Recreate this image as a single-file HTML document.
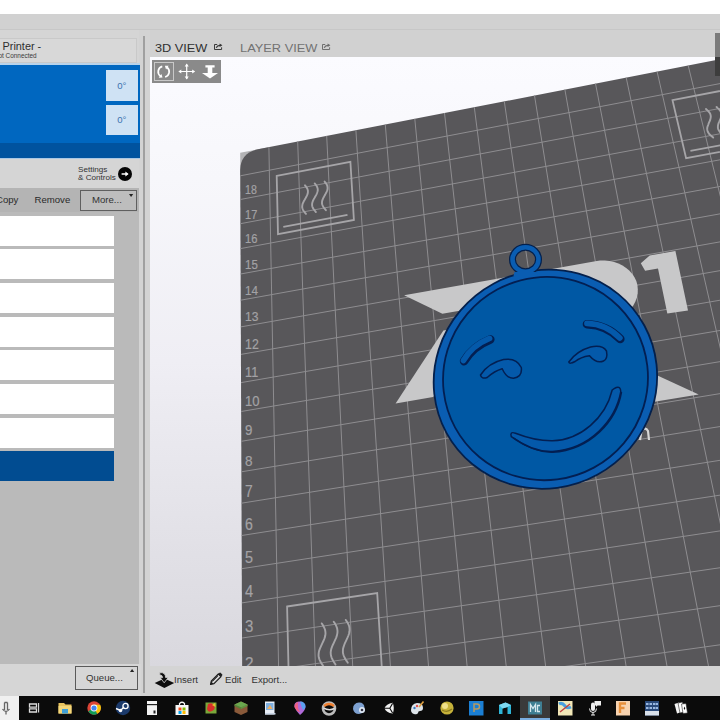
<!DOCTYPE html>
<html><head><meta charset="utf-8">
<style>
*{box-sizing:border-box}
html,body{margin:0;padding:0}
body{width:720px;height:720px;overflow:hidden;position:relative;background:#fff;font-family:"Liberation Sans",sans-serif;color:#333}
.a{position:absolute}
.t{position:absolute;white-space:nowrap;line-height:1}
</style></head><body>
<!-- top header band -->
<div class="a" style="left:0;top:14px;width:720px;height:43px;background:#d1d1d1"></div>
<div class="a" style="left:0;top:29px;width:720px;height:1px;background:#c7c7c7"></div>

<!-- left panel -->
<div class="a" style="left:0;top:30px;width:141px;height:634px;background:#d5d5d5"></div>
<div class="a" style="left:138.5px;top:30px;width:11px;height:666px;background:#d3d3d3"></div>
<div class="a" style="left:-4px;top:38px;width:141px;height:24.5px;background:#d8d8d8;border:1px solid #c9c9c9"></div>
<div class="t" style="left:2.5px;top:40.5px;font-size:10.9px;color:#2e2e2e">Printer -</div>
<div class="t" style="left:-1.5px;top:53px;font-size:6.4px;color:#3a3a3a">ot Connected</div>
<div class="a" style="left:0;top:63px;width:140px;height:2px;background:#b9d3ea"></div>
<div class="a" style="left:0;top:65px;width:140px;height:79px;background:#0067c0"></div>
<div class="a" style="left:0;top:143px;width:140px;height:15px;background:#00539f"></div>
<div class="a" style="left:0;top:157.5px;width:140px;height:1.5px;background:#a9c7e4"></div>
<div class="a" style="left:105.5px;top:70px;width:32px;height:31px;background:#cfe2f4"></div>
<div class="a" style="left:105.5px;top:104.5px;width:32px;height:30.5px;background:#cfe2f4"></div>
<div class="t" style="left:117.2px;top:81.3px;font-size:9.6px;color:#3d72ae">0°</div>
<div class="t" style="left:117.2px;top:114.8px;font-size:9.6px;color:#3d72ae">0°</div>

<div class="t" style="left:78px;top:165.6px;font-size:8.1px;color:#333;line-height:8px">Settings<br>&amp; Controls</div>
<div class="a" style="left:118px;top:166.5px;width:14px;height:14px;border-radius:50%;background:#050505"></div>
<svg class="a" style="left:118px;top:166.5px" width="14" height="14" viewBox="0 0 14 14"><path d="M3.6,7 H9.6" stroke="#fff" stroke-width="1.5" fill="none"/><path d="M7.4,4.4 L10.6,7 L7.4,9.6Z" fill="#fff"/></svg>

<div class="a" style="left:0;top:188px;width:138.5px;height:476px;background:#bababa"></div>
<div class="a" style="left:0;top:188px;width:138.5px;height:23.5px;background:#b4b4b4"></div>
<div class="t" style="left:-4px;top:195px;font-size:9.6px;color:#2a2a2a">Copy</div>
<div class="t" style="left:34.5px;top:195px;font-size:9.6px;color:#2a2a2a">Remove</div>
<div class="a" style="left:80px;top:190px;width:57px;height:21px;background:#bdbdbd;border:1px solid #5f5f5f"></div>
<div class="t" style="left:92px;top:195px;font-size:9.6px;color:#333">More...</div>
<svg class="a" style="left:128.8px;top:193.8px" width="5" height="4"><path d="M0,0H4.2L2.1,3Z" fill="#222"/></svg>
<div class="a" style="left:0;top:215.6px;width:113.75px;height:30px;background:#fff"></div>
<div class="a" style="left:0;top:249.2px;width:113.75px;height:30px;background:#fff"></div>
<div class="a" style="left:0;top:282.9px;width:113.75px;height:30px;background:#fff"></div>
<div class="a" style="left:0;top:316.5px;width:113.75px;height:30px;background:#fff"></div>
<div class="a" style="left:0;top:350.2px;width:113.75px;height:30px;background:#fff"></div>
<div class="a" style="left:0;top:383.8px;width:113.75px;height:30px;background:#fff"></div>
<div class="a" style="left:0;top:417.5px;width:113.75px;height:30px;background:#fff"></div>
<div class="a" style="left:0;top:451px;width:113.5px;height:29.5px;background:#014c91"></div>

<div class="a" style="left:0;top:664px;width:141px;height:32px;background:#d6d6d6"></div>
<div class="a" style="left:74.5px;top:666px;width:63px;height:23.5px;background:#d6d6d6;border:1px solid #5a5a5a"></div>
<div class="t" style="left:86px;top:672.5px;font-size:9.6px;color:#333">Queue...</div>
<svg class="a" style="left:130px;top:669px" width="5" height="4"><path d="M0,3H4.2L2.1,0Z" fill="#222"/></svg>

<!-- divider -->
<div class="a" style="left:142.5px;top:36px;width:2.2px;height:657px;background:#a0a0a0"></div>

<!-- view tabs -->
<div class="t" style="left:155.3px;top:42.7px;font-size:11.4px;color:#2f2f2f;transform:scaleX(1.115);transform-origin:0 0">3D VIEW</div>
<svg class="a" style="left:213px;top:43px" width="10" height="8" viewBox="0 0 10 8"><path d="M4.2,1.5H1.5V6.5H8.6V4.3" stroke="#333" stroke-width="0.95" fill="none"/><path d="M3.2,4.8Q4.2,2.6 7,2.4" stroke="#333" stroke-width="1.2" fill="none"/><path d="M6.6,0.4L9.4,2.3L6.6,4.1Z" fill="#333"/></svg>
<div class="t" style="left:239.8px;top:42.7px;font-size:11.4px;color:#727272;transform:scaleX(1.125);transform-origin:0 0">LAYER VIEW</div>
<svg class="a" style="left:321px;top:43px" width="10" height="8" viewBox="0 0 10 8"><path d="M4.2,1.5H1.5V6.5H8.6V4.3" stroke="#6a6a6a" stroke-width="0.95" fill="none"/><path d="M3.2,4.8Q4.2,2.6 7,2.4" stroke="#6a6a6a" stroke-width="1.2" fill="none"/><path d="M6.6,0.4L9.4,2.3L6.6,4.1Z" fill="#6a6a6a"/></svg>

<!-- viewport -->
<div class="a" style="left:149.5px;top:57px;width:571px;height:609px;background:linear-gradient(#fbfbff 0%,#f7f7fb 20%,#efeef4 50%,#d9d8de 100%);overflow:hidden">
<svg width="571" height="609" viewBox="149.5 57 571 609" style="position:absolute;left:0;top:0">
<polygon points="239.7,152.7 268.4,147.2 268.8,170.3 239.8,175.8" fill="#b3b3b5"/>
<path d="M239.7,170.0 Q240,153 257.4,149.3 L910.5,22.2 L1220.4,848.8 L242.8,961.6 Z" fill="#58575a"/>
<path d="M268.4,147.2L283.5,956.9M297.2,141.5L324.6,952.2M326.2,135.9L366.0,947.4M355.4,130.2L407.7,942.6M384.8,124.5L449.7,937.8M414.3,118.8L492.1,932.9M444.0,113.0L534.9,927.9M473.8,107.2L577.9,923.0M503.8,101.3L621.4,918.0M534.0,95.5L665.2,912.9M564.4,89.6L709.3,907.8M595.0,83.6L753.9,902.7M625.7,77.6L798.8,897.5M656.6,71.6L844.1,892.3M687.7,65.6L889.7,887.0M719.0,59.5L935.8,881.7M750.4,53.4L982.2,876.3M782.0,47.2L1029.0,870.9M813.9,41.0L1076.3,865.5M242.6,916.5L1202.7,801.5M242.5,872.9L1185.6,755.9M242.3,830.6L1169.1,711.8M242.1,789.7L1153.1,669.3M242.0,750.0L1137.7,628.1M241.8,711.6L1122.8,588.4M241.7,674.2L1108.3,549.9M241.6,638.0L1094.4,512.6M241.4,602.9L1080.8,476.5M241.3,568.7L1067.7,441.6M241.2,535.5L1055.0,407.6M241.0,503.2L1042.7,374.8M240.9,471.8L1030.7,342.8M240.8,441.3L1019.1,311.8M240.7,411.5L1007.8,281.7M240.6,382.6L996.8,252.5M240.5,354.4L986.2,224.0M240.3,326.9L975.8,196.4M240.2,300.2L965.7,169.5M240.1,274.0L955.9,143.3M240.0,248.6L946.3,117.8M239.9,223.7L937.0,93.0M239.8,199.5L927.9,68.8M239.8,175.8L919.1,45.2" stroke="#8e8d90" stroke-width="1" fill="none"/>
<polygon points="276.2,175.9 349.9,161.8 353.4,220.0 277.5,234.1" fill="none" stroke="#a6a5a8" stroke-width="1.8"/>
<path d="M282.8,226.9L347.0,214.9" stroke="#a6a5a8" stroke-width="1.8"/>
<path d="M304.5,185.3 L305.3,186.3 L306.0,187.4 L306.7,188.4 L307.1,189.5 L307.4,190.7 L307.4,191.9 L307.3,193.1 L306.9,194.4 L306.4,195.7 L305.7,197.0 L305.0,198.3 L304.2,199.7 L303.4,201.0 L302.8,202.3 L302.2,203.6 L301.9,204.9 L301.7,206.2 L301.7,207.4 L302.0,208.5 L302.4,209.6 L303.0,210.7 L303.8,211.8 L304.6,212.9 L305.5,213.9" stroke="#a6a5a8" stroke-width="1.9" fill="none" stroke-linecap="round"/>
<path d="M314.2,183.4 L315.1,184.5 L315.8,185.5 L316.5,186.6 L316.9,187.7 L317.2,188.8 L317.3,190.0 L317.1,191.2 L316.7,192.5 L316.2,193.8 L315.6,195.1 L314.8,196.5 L314.1,197.8 L313.3,199.1 L312.6,200.5 L312.1,201.8 L311.7,203.1 L311.6,204.3 L311.6,205.5 L311.9,206.7 L312.3,207.8 L313.0,208.9 L313.7,210.0 L314.6,211.0 L315.4,212.1" stroke="#a6a5a8" stroke-width="1.9" fill="none" stroke-linecap="round"/>
<path d="M324.1,181.6 L324.9,182.6 L325.7,183.6 L326.3,184.7 L326.8,185.8 L327.0,187.0 L327.1,188.1 L327.0,189.4 L326.6,190.6 L326.1,191.9 L325.4,193.2 L324.7,194.6 L323.9,195.9 L323.2,197.3 L322.5,198.6 L322.0,199.9 L321.6,201.2 L321.5,202.4 L321.5,203.6 L321.8,204.8 L322.3,205.9 L322.9,207.0 L323.7,208.1 L324.5,209.1 L325.4,210.2" stroke="#a6a5a8" stroke-width="1.9" fill="none" stroke-linecap="round"/>
<polygon points="672.0,100.1 751.5,84.8 767.6,143.0 685.6,158.2" fill="none" stroke="#a6a5a8" stroke-width="1.8"/>
<path d="M689.9,150.9L759.3,138.0" stroke="#a6a5a8" stroke-width="1.8"/>
<path d="M705.5,109.0 L706.7,110.1 L707.7,111.1 L708.6,112.2 L709.4,113.2 L709.9,114.4 L710.2,115.6 L710.3,116.8 L710.1,118.1 L709.8,119.4 L709.4,120.7 L708.8,122.0 L708.2,123.4 L707.7,124.8 L707.2,126.1 L706.8,127.4 L706.7,128.7 L706.8,129.9 L707.1,131.1 L707.6,132.3 L708.3,133.4 L709.2,134.5 L710.3,135.6 L711.5,136.6 L712.7,137.6" stroke="#a6a5a8" stroke-width="1.9" fill="none" stroke-linecap="round"/>
<path d="M716.1,107.0 L717.2,108.1 L718.3,109.1 L719.2,110.1 L720.0,111.2 L720.5,112.4 L720.8,113.6 L720.9,114.8 L720.8,116.0 L720.5,117.4 L720.0,118.7 L719.4,120.0 L718.9,121.4 L718.3,122.7 L717.8,124.1 L717.5,125.4 L717.4,126.7 L717.4,127.9 L717.7,129.1 L718.3,130.3 L719.0,131.4 L719.9,132.5 L721.0,133.5 L722.2,134.6 L723.4,135.6" stroke="#a6a5a8" stroke-width="1.9" fill="none" stroke-linecap="round"/>
<path d="M726.7,105.0 L727.8,106.0 L728.9,107.1 L729.8,108.1 L730.6,109.2 L731.1,110.4 L731.5,111.5 L731.5,112.8 L731.4,114.0 L731.1,115.3 L730.7,116.7 L730.1,118.0 L729.5,119.4 L729.0,120.7 L728.5,122.1 L728.2,123.4 L728.1,124.7 L728.1,125.9 L728.5,127.1 L729.0,128.3 L729.7,129.4 L730.7,130.5 L731.8,131.5 L732.9,132.6 L734.2,133.6" stroke="#a6a5a8" stroke-width="1.9" fill="none" stroke-linecap="round"/>
<polygon points="286.6,606.5 376.7,593.1 382.1,680.5 288.6,693.7" fill="none" stroke="#a6a5a8" stroke-width="1.8"/>
<path d="M295.1,683.3L374.0,672.1" stroke="#a6a5a8" stroke-width="1.8"/>
<path d="M321.3,623.4 L322.3,625.0 L323.2,626.7 L324.0,628.3 L324.6,630.0 L324.9,631.8 L325.0,633.5 L324.8,635.3 L324.4,637.2 L323.7,639.1 L322.9,641.0 L322.0,642.9 L321.1,644.8 L320.2,646.8 L319.4,648.7 L318.7,650.6 L318.3,652.4 L318.1,654.3 L318.1,656.1 L318.4,657.8 L319.0,659.6 L319.8,661.3 L320.7,663.0 L321.8,664.6 L322.8,666.3" stroke="#a6a5a8" stroke-width="1.9" fill="none" stroke-linecap="round"/>
<path d="M333.2,621.7 L334.3,623.3 L335.2,624.9 L336.0,626.6 L336.6,628.3 L336.9,630.0 L337.0,631.8 L336.8,633.6 L336.4,635.4 L335.8,637.3 L335.0,639.2 L334.1,641.1 L333.2,643.1 L332.3,645.0 L331.5,646.9 L330.8,648.8 L330.4,650.7 L330.2,652.5 L330.3,654.3 L330.6,656.1 L331.2,657.8 L332.0,659.5 L332.9,661.2 L334.0,662.9 L335.0,664.6" stroke="#a6a5a8" stroke-width="1.9" fill="none" stroke-linecap="round"/>
<path d="M345.3,619.9 L346.3,621.5 L347.3,623.1 L348.1,624.8 L348.7,626.5 L349.0,628.2 L349.1,630.0 L348.9,631.8 L348.5,633.7 L347.9,635.5 L347.1,637.4 L346.2,639.4 L345.3,641.3 L344.4,643.2 L343.6,645.2 L343.0,647.1 L342.5,648.9 L342.4,650.8 L342.4,652.6 L342.8,654.3 L343.4,656.1 L344.2,657.8 L345.1,659.5 L346.2,661.1 L347.3,662.8" stroke="#a6a5a8" stroke-width="1.9" fill="none" stroke-linecap="round"/>
<text transform="translate(244.6 668.6) scale(0.88 1)" font-size="17.4" fill="#a3a2a5" stroke="#a3a2a5" stroke-width="0.2" font-family="Liberation Sans">2</text>
<text transform="translate(244.6 632.3) scale(0.88 1)" font-size="17.0" fill="#a3a2a5" stroke="#a3a2a5" stroke-width="0.2" font-family="Liberation Sans">3</text>
<text transform="translate(244.6 597.1) scale(0.88 1)" font-size="16.7" fill="#a3a2a5" stroke="#a3a2a5" stroke-width="0.2" font-family="Liberation Sans">4</text>
<text transform="translate(244.6 563.0) scale(0.88 1)" font-size="16.3" fill="#a3a2a5" stroke="#a3a2a5" stroke-width="0.2" font-family="Liberation Sans">5</text>
<text transform="translate(244.6 529.7) scale(0.88 1)" font-size="16.0" fill="#a3a2a5" stroke="#a3a2a5" stroke-width="0.2" font-family="Liberation Sans">6</text>
<text transform="translate(244.6 497.4) scale(0.88 1)" font-size="15.7" fill="#a3a2a5" stroke="#a3a2a5" stroke-width="0.2" font-family="Liberation Sans">7</text>
<text transform="translate(244.6 466.0) scale(0.88 1)" font-size="15.4" fill="#a3a2a5" stroke="#a3a2a5" stroke-width="0.2" font-family="Liberation Sans">8</text>
<text transform="translate(244.6 435.4) scale(0.88 1)" font-size="15.1" fill="#a3a2a5" stroke="#a3a2a5" stroke-width="0.2" font-family="Liberation Sans">9</text>
<text transform="translate(244.6 405.6) scale(0.88 1)" font-size="14.8" fill="#a3a2a5" stroke="#a3a2a5" stroke-width="0.2" font-family="Liberation Sans">10</text>
<text transform="translate(244.6 376.8) scale(0.88 1)" font-size="14.4" fill="#a3a2a5" stroke="#a3a2a5" stroke-width="0.2" font-family="Liberation Sans">11</text>
<text transform="translate(244.6 348.7) scale(0.88 1)" font-size="14.0" fill="#a3a2a5" stroke="#a3a2a5" stroke-width="0.2" font-family="Liberation Sans">12</text>
<text transform="translate(244.6 321.3) scale(0.88 1)" font-size="13.7" fill="#a3a2a5" stroke="#a3a2a5" stroke-width="0.2" font-family="Liberation Sans">13</text>
<text transform="translate(244.6 294.6) scale(0.88 1)" font-size="13.3" fill="#a3a2a5" stroke="#a3a2a5" stroke-width="0.2" font-family="Liberation Sans">14</text>
<text transform="translate(244.6 268.6) scale(0.88 1)" font-size="13.0" fill="#a3a2a5" stroke="#a3a2a5" stroke-width="0.2" font-family="Liberation Sans">15</text>
<text transform="translate(244.6 243.3) scale(0.88 1)" font-size="12.7" fill="#a3a2a5" stroke="#a3a2a5" stroke-width="0.2" font-family="Liberation Sans">16</text>
<text transform="translate(244.6 218.5) scale(0.88 1)" font-size="12.4" fill="#a3a2a5" stroke="#a3a2a5" stroke-width="0.2" font-family="Liberation Sans">17</text>
<text transform="translate(244.6 194.4) scale(0.88 1)" font-size="12.1" fill="#a3a2a5" stroke="#a3a2a5" stroke-width="0.2" font-family="Liberation Sans">18</text>
<polygon points="403.6,295.2 551.7,268.9 555.5,293.9 441.9,313.8" fill="#c8c8c9"/>
<polygon points="550.0,269.2 594.8,261.2 599.6,260.6 604.3,260.6 609.0,261.0 613.6,262.0 618.0,263.5 622.0,265.5 625.7,267.9 629.0,270.7 631.8,273.9 634.1,277.4 635.8,281.1 636.9,285.1 637.3,289.2 637.2,293.3 636.4,297.4 634.9,301.5 632.9,305.3 630.3,309.0 627.1,312.3 623.5,315.3 619.5,317.9 615.1,320.0 610.5,321.6 605.7,322.7 559.5,330.7" fill="#c8c8c9"/>
<polygon points="442.9,330.4 501.0,320.3 432.6,397.1 395.1,403.4" fill="#c8c8c9"/>
<polygon points="476.6,405.8 657.5,375.7 698.2,394.5 479.4,430.3" fill="#c8c8c9"/>
<polygon points="640.3,263.3 644.6,270.8 657.5,268.5 666.8,313.4 687.5,310.5 674.9,250.9 649.2,255.5" fill="#c8c8c9"/><path d="M639.5,440 L641,430.5 Q645,426.5 647.5,431 L648.5,440" stroke="#d6d6d6" stroke-width="2.2" fill="none"/>
<g>
<ellipse cx="544.9" cy="379.2" rx="112.6" ry="108.7" transform="rotate(-28.5 544.9 379.2)" fill="#0a5db2" stroke="#04204c" stroke-width="1.8"/>
<ellipse cx="545" cy="378.6" rx="102.8" ry="101.3" transform="rotate(-28.5 545 378.6)" fill="#0058a4" stroke="#031f52" stroke-width="1.8"/>
<g stroke-linecap="round" fill="none">
<path d="M463.6,361.2 Q472,346.5 489.8,339.4" stroke="#031f52" stroke-width="8.6"/>
<path d="M463,360.4 Q471.5,345.5 489,338.4" stroke="#0459aa" stroke-width="5.8"/>
<path d="M586.5,324.2 Q606.5,325 619.8,339" stroke="#031f52" stroke-width="8.6"/>
<path d="M586.5,323.3 Q606,324 619.3,338" stroke="#0459aa" stroke-width="5.8"/>
</g>
<path d="M510.8,436.7 C525,447 540,452 552,451.5 C590,449 615,420 620.3,391.7 Q620,386 615.8,387.5 Q613.5,388.5 611.7,390 C605,418 580,440 552,440.8 C540,441 527,438 515,433.3 Q509,431 510.8,436.7Z" fill="#0459aa" stroke="#031f52" stroke-width="1.5"/>
<path d="M513,438 C527,448 541,452.6 552,452.3 C590,450 616,421 621,392" fill="none" stroke="#031f52" stroke-width="1.5"/>
<path d="M480,375 Q488,363 503,359.6 Q516,357.5 520.8,367.5 Q522,377 513,378.3 Q506,378.5 501.7,368.8 Q494,371 486.7,377.5 Q481,379.5 480,375Z" fill="#0459aa" stroke="#031f52" stroke-width="1.5"/>
<path d="M568.3,362 Q576,351 590,347 Q602,344.5 606,351 Q607.5,359 603,361 Q596,364 589,355.7 Q580,357 574.6,361.5 Q569,364.5 568.3,362Z" fill="#0459aa" stroke="#031f52" stroke-width="1.5"/>
<!-- hanging ring -->
<ellipse cx="525" cy="259.5" rx="13" ry="12.2" fill="none" stroke="#04204c" stroke-width="7"/>
<ellipse cx="525" cy="259.5" rx="13" ry="12.2" fill="none" stroke="#0a5db2" stroke-width="4.6"/>
<path d="M514,272 L536,272 L537,276 L513,276Z" fill="#0a5db2"/>
</g>

</svg>
</div>
<div class="a" style="left:715px;top:33px;width:5px;height:24px;background:#7b7b7b"></div>
<div class="a" style="left:715px;top:57px;width:5px;height:19px;background:#3d3d3d"></div>

<!-- toolbar -->
<div class="a" style="left:152px;top:60px;width:69px;height:23px;background:#8a8a8a"></div>
<div class="a" style="left:154px;top:61.5px;width:20px;height:19px;border:1px solid #c8c8c8"></div>
<svg class="a" style="left:152px;top:60px" width="69" height="23" viewBox="152 60 69 23">
<path d="M162.28,66.39 A5.5,5.5 0 0 0 160.55,76.21 M165.12,77.01 A5.5,5.5 0 0 0 166.85,67.19" fill="none" stroke="#fff" stroke-width="1.7"/><path d="M162.51,77.58L158.73,77.75L161.37,73.98ZM164.89,65.82L168.67,65.65L166.03,69.42Z" fill="#fff"/>
<g stroke="#fff" stroke-width="1.2"><path d="M179.5,71.5H194M186.7,64.5V79"/></g>
<g fill="#fff"><path d="M178.3,71.5L181.3,69.5V73.5Z"/><path d="M195.2,71.5L192.2,69.5V73.5Z"/><path d="M186.7,63.5L184.7,66.5H188.7Z"/><path d="M186.7,79.5L184.7,76.5H188.7Z"/></g>
<path d="M205.4,65.2H214.6V67.4H212.3V73H218L210,78.6L202,73H207.7V67.4H205.4Z" fill="#fff"/>
</svg>

<!-- bottom bar -->
<div class="a" style="left:149.5px;top:666px;width:571px;height:30px;background:#d4d4d4"></div>
<svg class="a" style="left:154px;top:671px" width="21" height="18" viewBox="0 0 21 18">
<path d="M0.7,12 L10.4,7.6 L20.2,12 L10.4,17Z" fill="#0d0d0d"/>
<path d="M5.8,1.6 Q11.6,1.2 11.6,6.6 L14.2,6.6 L10.2,11.8 L6.2,6.6 L8.6,6.6 Q8.6,4.2 5.8,3.9Z" fill="#0d0d0d" stroke="#d4d4d4" stroke-width="0.8"/>
</svg>
<svg class="a" style="left:209px;top:672px" width="14" height="14" viewBox="0 0 14 14">
<path d="M1.6,12.4 L2.4,9 L9.4,2 L12,4.6 L5,11.6 Z" fill="#d4d4d4" stroke="#1e1e1e" stroke-width="1.3" stroke-linejoin="round"/>
<path d="M1.6,12.4 L2.2,9.6 L4.4,11.8Z" fill="#1e1e1e"/>
<path d="M9.4,2 L10.6,0.8 Q11.2,0.4 11.8,0.9 L13.1,2.2 Q13.6,2.8 13.2,3.4 L12,4.6Z" fill="#1e1e1e"/>
<path d="M3.3,9.6 L8.8,4.1" stroke="#1e1e1e" stroke-width="0.9"/>
</svg>
<div class="t" style="left:174px;top:675px;font-size:9.6px;color:#333">Insert</div>
<div class="t" style="left:225px;top:675px;font-size:9.6px;color:#333">Edit</div>
<div class="t" style="left:251.5px;top:675px;font-size:9.6px;color:#333">Export...</div>

<!-- taskbar -->
<div class="a" style="left:0;top:696px;width:720px;height:24px;background:#0b0b0b"></div>
<div class="a" style="left:0;top:696px;width:19px;height:24px;background:#f0f0f0"></div>
<svg class="a" style="left:-2.0px;top:700.0px" width="16" height="16" viewBox="0 0 16 16"><path d="M6.5,2.5V10M9.5,2.5V10M6.5,2.5H9.5M4.5,9Q8,14 11.5,9M8,12V14.5" stroke="#666" stroke-width="1.3" fill="none"/></svg>
<svg class="a" style="left:25.0px;top:700.0px" width="16" height="16" viewBox="0 0 16 16"><path d="M4.5,4H11.5V7.2H4.5Z M4.5,8.8H11.5V12H4.5Z" stroke="#ddd" stroke-width="1.3" fill="none"/><path d="M13.6,3V12.5" stroke="#ddd" stroke-width="1.1"/></svg>
<svg class="a" style="left:57.0px;top:700.0px" width="16" height="16" viewBox="0 0 16 16"><path d="M1.5,3H7L8.5,4.5H14.5V13.5H1.5Z" fill="#e8c35e"/><path d="M1.5,6H14.5V13.5H1.5Z" fill="#f4d77a"/><path d="M5,9H11V13.5H5Z" fill="#3fa0d8"/></svg>
<svg class="a" style="left:85.5px;top:700.0px" width="16" height="16" viewBox="0 0 16 16"><circle cx="8" cy="8" r="6.7" fill="#db4437"/><path d="M8,8 L2.2,11.35 A6.7,6.7 0 0 0 11.35,13.8Z" fill="#0f9d58"/><path d="M8,8 L11.35,13.8 A6.7,6.7 0 0 0 14.2,4.8 L8,4.8Z" fill="#f4c20d"/><circle cx="8" cy="8" r="3.4" fill="#fff"/><circle cx="8" cy="8" r="2.6" fill="#4285f4"/></svg>
<svg class="a" style="left:114.5px;top:700.0px" width="16" height="16" viewBox="0 0 16 16"><circle cx="8" cy="8" r="7.2" fill="#1b3a6b"/><circle cx="10.5" cy="6" r="2.6" fill="none" stroke="#fff" stroke-width="1.3"/><circle cx="5.5" cy="10.5" r="1.8" fill="#fff"/><path d="M1,8.5 L5.5,10.5 L9,7" stroke="#fff" stroke-width="1.4" fill="none"/></svg>
<svg class="a" style="left:144.0px;top:700.0px" width="16" height="16" viewBox="0 0 16 16"><rect x="3" y="1" width="10" height="14" fill="#f2f2f2"/><rect x="3" y="4" width="10" height="1.2" fill="#222"/><rect x="9.5" y="10.5" width="2" height="3" fill="#222"/></svg>
<svg class="a" style="left:174.0px;top:700.0px" width="16" height="16" viewBox="0 0 16 16"><path d="M1.5,5H14.5V15H1.5Z" fill="#f6f6f6"/><path d="M5.5,5V3.5Q8,1 10.5,3.5V5" stroke="#f6f6f6" stroke-width="1.2" fill="none"/><rect x="4.5" y="7.5" width="3" height="3" fill="#f25022"/><rect x="8.5" y="7.5" width="3" height="3" fill="#7fba00"/><rect x="4.5" y="11" width="3" height="3" fill="#00a4ef"/><rect x="8.5" y="11" width="3" height="3" fill="#ffb900"/></svg>
<svg class="a" style="left:203.0px;top:700.0px" width="16" height="16" viewBox="0 0 16 16"><rect x="2.5" y="2.5" width="11" height="11" fill="#7aa83a"/><path d="M5,4 Q9,2 11,5 Q13,9 9,11 Q5,13 4,9Z" fill="#d8302a"/><path d="M9,5 L12,3 L12.5,7Z" fill="#e9c12f"/></svg>
<svg class="a" style="left:233.0px;top:700.0px" width="16" height="16" viewBox="0 0 16 16"><path d="M1.5,4.5 L8,1.5 L14.5,4.5 L14.5,12 L8,15 L1.5,12Z" fill="#8a5a3a"/><path d="M1.5,4.5 L8,1.5 L14.5,4.5 L8,7.5Z" fill="#6aa84f"/><path d="M1.5,4.5 L8,7.5 V9 L1.5,6Z" fill="#4f8a3a"/><path d="M14.5,4.5 L8,7.5 V9 L14.5,6Z" fill="#5a9a42"/></svg>
<svg class="a" style="left:262.0px;top:700.0px" width="16" height="16" viewBox="0 0 16 16"><path d="M3,1.5H12.5V14.5H3Z" fill="#e8eef6"/><rect x="4" y="3" width="7.5" height="7" fill="#7fb0e0"/><path d="M5,9 L8,5 L10.5,9Z" fill="#f0b060"/><path d="M3,13H13.5V14.5H3Z" fill="#c8d4e4"/></svg>
<svg class="a" style="left:292.0px;top:700.0px" width="16" height="16" viewBox="0 0 16 16"><path d="M8,15 Q4,11 2.5,7 Q1.5,2 7,1.5 Q13.5,1.5 13.5,7 Q13,11 8,15Z" fill="#b06ad8"/><path d="M8,1.5 Q13.5,1.5 13.5,7 Q13,9 11,10 Q9,6 8,1.5Z" fill="#5aa0f0"/><path d="M2.5,7 Q2.5,3 6,2 Q5,8 8,12 Q5,12 2.5,7Z" fill="#f06080"/></svg>
<svg class="a" style="left:320.5px;top:700.0px" width="16" height="16" viewBox="0 0 16 16"><circle cx="8" cy="8.5" r="6" fill="none" stroke="#bbb" stroke-width="2.6"/><path d="M3,6 Q8,2 13,6" stroke="#f08030" stroke-width="2.4" fill="none"/><path d="M2.5,8 Q8,11 13.5,8.5" stroke="#ddd" stroke-width="1.5" fill="none"/></svg>
<svg class="a" style="left:350.5px;top:700.0px" width="16" height="16" viewBox="0 0 16 16"><path d="M2,9 Q2,3 8,2.5 Q13.5,2.5 13.5,8 Q14,13 8,14 Q3,14 2,9Z" fill="#7da0d0"/><circle cx="11" cy="10" r="3" fill="#dfe8f4"/><circle cx="11" cy="10" r="1.3" fill="#334"/></svg>
<svg class="a" style="left:380.5px;top:700.0px" width="16" height="16" viewBox="0 0 16 16"><path d="M3.5,8.2 Q5,4 11.8,2.8 Q13.8,8 11.8,13.6 Q5,12.5 3.5,8.2Z" fill="#f2f2f2"/><path d="M8.8,8.2 L3,8.2 M8.8,8.2 L11.6,3.4 M8.8,8.2 L11.6,13" stroke="#0b0b0b" stroke-width="1.1"/></svg>
<svg class="a" style="left:408.5px;top:700.0px" width="16" height="16" viewBox="0 0 16 16"><path d="M2,10 Q2,4 8,3 Q14,3 14,8 Q14,11 11,11 Q9,11 9,13 Q8,15 5,14 Q2,13 2,10Z" fill="#dde4ea"/><circle cx="5.5" cy="8" r="1.2" fill="#3a7ac0"/><circle cx="8" cy="6" r="1.2" fill="#e05050"/><path d="M10,7 L14.5,1.5" stroke="#e0a040" stroke-width="1.6"/></svg>
<svg class="a" style="left:438.5px;top:700.0px" width="16" height="16" viewBox="0 0 16 16"><circle cx="8" cy="8" r="6.6" fill="#c6b23a"/><circle cx="6" cy="6" r="3" fill="#efe08a"/><path d="M3,10 Q8,13 13,9" stroke="#8a7a20" stroke-width="1.2" fill="none"/></svg>
<svg class="a" style="left:467.5px;top:700.0px" width="16" height="16" viewBox="0 0 16 16"><rect x="1" y="1" width="14.5" height="14.5" fill="#1b7fd4"/><path d="M6,12V4H9Q11.5,4 11.5,6.5Q11.5,9 9,9H6" stroke="#b89a60" stroke-width="1.5" fill="none"/></svg>
<svg class="a" style="left:497.0px;top:700.0px" width="16" height="16" viewBox="0 0 16 16"><path d="M2,5 L8.5,2.5 L14,5 V14 L10.5,14 V7 L5.5,8.5 V14 H2Z" fill="#2fb6d8"/><path d="M8.5,2.5 L14,5 L10.5,7 L5.5,8.5 L2,5Z" fill="#7fd8f0"/></svg>
<div class="a" style="left:520px;top:696px;width:29.5px;height:24px;background:#3a3a3a"></div><div class="a" style="left:520px;top:718px;width:29.5px;height:2px;background:#7aaee0"></div>
<svg class="a" style="left:526.5px;top:700.0px" width="16" height="16" viewBox="0 0 16 16"><rect x="1" y="1.5" width="14" height="13" fill="#3f7f93"/><path d="M3.5,12V4.5L6,8.5L8.5,4.5V12" stroke="#d8e8ee" stroke-width="1.3" fill="none"/><path d="M13,5.5H10.5V11.5H13" stroke="#d8e8ee" stroke-width="1.3" fill="none"/></svg>
<svg class="a" style="left:556.5px;top:700.0px" width="16" height="16" viewBox="0 0 16 16"><rect x="1" y="1" width="14.5" height="14.5" fill="#f2e8b8"/><path d="M2,4 Q5,2 8,6 Q10,9 14,7" stroke="#4aa0e0" stroke-width="3" fill="none"/><path d="M3,12 L13,4" stroke="#c04040" stroke-width="1.4"/></svg>
<svg class="a" style="left:585.5px;top:700.0px" width="16" height="16" viewBox="0 0 16 16"><path d="M5,4.5 Q5,2.5 7,2.5 Q9,2.5 9,4.5V9Q9,11 7,11Q5,11 5,9Z" fill="#eee"/><path d="M3.5,8.5Q3.5,12.5 7,12.5Q10.5,12.5 10.5,8.5M7,12.5V15M5,15H9" stroke="#eee" stroke-width="1" fill="none"/><path d="M8.5,1H15V5.5H11.5L10,7V5.5H8.5Z" fill="#eee"/></svg>
<svg class="a" style="left:614.5px;top:700.0px" width="16" height="16" viewBox="0 0 16 16"><rect x="1" y="1" width="14" height="14.5" fill="#f7d3b0"/><path d="M5,13V3.5H11M5,8H9.5" stroke="#e8903a" stroke-width="2.4" fill="none"/></svg>
<svg class="a" style="left:644.0px;top:700.0px" width="16" height="16" viewBox="0 0 16 16"><rect x="1" y="1" width="14" height="14.5" fill="#2a4a7a"/><g fill="#9ab8e0"><rect x="2" y="3" width="2.5" height="2"/><rect x="5.5" y="3" width="2.5" height="2"/><rect x="9" y="3" width="2.5" height="2"/><rect x="12" y="3" width="2" height="2"/><rect x="2" y="7" width="2.5" height="2"/><rect x="5.5" y="7" width="2.5" height="2"/><rect x="9" y="7" width="2.5" height="2"/><rect x="12" y="7" width="2" height="2"/></g><rect x="1" y="11" width="14" height="4.5" fill="#d8e0ea"/></svg>
<svg class="a" style="left:673.0px;top:700.0px" width="16" height="16" viewBox="0 0 16 16"><path d="M1.5,4 L6,2.5 L8.5,12 L4,13.5Z" fill="#f4f4f4"/><path d="M5,3 L9.5,2 L11.5,12 L7,13Z" fill="#fff" stroke="#222" stroke-width="0.6"/><path d="M8.5,4 L13,3.5 L14.5,13 L10,13.5Z" fill="#fff" stroke="#222" stroke-width="0.6"/><path d="M11.5,6.5 Q13,8 11.5,10 Q10,8 11.5,6.5Z" fill="#111"/></svg>
</body></html>
